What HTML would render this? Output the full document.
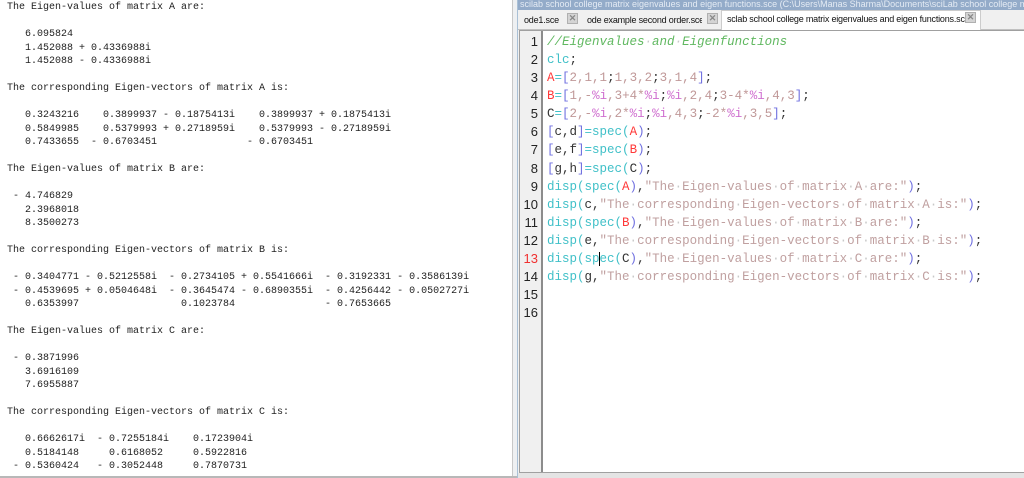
<!DOCTYPE html>
<html><head><meta charset="utf-8"><style>
*{margin:0;padding:0;box-sizing:border-box}
body{width:1024px;height:478px;overflow:hidden;background:#fff;position:relative;font-family:"Liberation Sans",sans-serif}
#con{position:absolute;left:0;top:0;width:513px;height:476px;background:#fff;border-right:1px solid #c8c8c8;overflow:hidden}
#con pre{position:absolute;left:7px;top:1px;font-family:"Liberation Mono",monospace;font-size:10px;line-height:13.5px;color:#222}
#sep{position:absolute;left:513px;top:0;width:4px;height:478px;background:#eef0f2}
#bot{position:absolute;left:0;top:476px;width:517px;height:2px;background:#b8b8b8}
#win{position:absolute;left:517px;top:0;width:507px;height:478px;background:#f0f0f0;border-left:1px solid #a9c0d6}
#title{position:absolute;left:0;top:0;width:507px;height:10px;background:#93abc9;color:#e4ebf4;font-size:9px;line-height:8px;white-space:nowrap;overflow:hidden;padding-left:2px}
#tabs{position:absolute;left:0;top:10px;width:507px;height:20px;background:#f0f0f0;border-bottom:1px solid #c0c0c0}
.tab{position:absolute;top:2px;height:18px;font-size:9px;letter-spacing:-0.2px;line-height:16px;color:#111;white-space:nowrap;overflow:hidden}
.x{position:absolute;top:3px;width:11px;height:11px;background:#d4d4d4;border:1px solid #b0b0b0;color:#888;font-size:9px;line-height:9px;text-align:center;font-weight:bold}
#ed{position:absolute;left:1px;top:30px;width:506px;height:443px;background:#fff;border:1px solid #a0a0a0}
#gut{position:absolute;left:0;top:0;width:23px;height:441px;background:#f0f0f0;border-right:2px solid #8c8c8c}
#gut div,#code div{height:18.08px;line-height:18px}
#gut{font-family:"Liberation Sans",sans-serif;font-size:13px;text-align:right;padding-right:3px;padding-top:2px;color:#222}
#code{position:absolute;left:27px;top:2px;font-family:"Liberation Mono",monospace;font-size:12.5px;white-space:pre;color:#333}
.cm{color:#60b860;font-style:italic}.k{color:#40c0c8}.r{color:#ff3838}.n{color:#c09898}.b{color:#7070e0}.p{color:#d070d0}.s{color:#c0a0a0}.d{color:#c8c8c8}
#below{position:absolute;left:0;top:473px;width:507px;height:5px;background:#e4e4e4}
</style></head><body>
<div id="con"><pre>The Eigen-values of matrix A are:

   6.095824
   1.452088 + 0.4336988i
   1.452088 - 0.4336988i

The corresponding Eigen-vectors of matrix A is:

   0.3243216    0.3899937 - 0.1875413i    0.3899937 + 0.1875413i
   0.5849985    0.5379993 + 0.2718959i    0.5379993 - 0.2718959i
   0.7433655  - 0.6703451               - 0.6703451

The Eigen-values of matrix B are:

 - 4.746829
   2.3968018
   8.3500273

The corresponding Eigen-vectors of matrix B is:

 - 0.3404771 - 0.5212558i  - 0.2734105 + 0.5541666i  - 0.3192331 - 0.3586139i
 - 0.4539695 + 0.0504648i  - 0.3645474 - 0.6890355i  - 0.4256442 - 0.0502727i
   0.6353997                 0.1023784               - 0.7653665

The Eigen-values of matrix C are:

 - 0.3871996
   3.6916109
   7.6955887

The corresponding Eigen-vectors of matrix C is:

   0.6662617i  - 0.7255184i    0.1723904i
   0.5184148     0.6168052     0.5922816
 - 0.5360424   - 0.3052448     0.7870731</pre></div>
<div id="sep"></div><div id="bot"></div>
<div id="win">
<div id="title">scilab school college matrix eigenvalues and eigen functions.sce (C:\Users\Manas Sharma\Documents\sciLab school college matrix eigenvalues and eigen functions.sce) - SciNotes</div>
<div id="tabs">
<div class="tab" style="left:6px;width:40px">ode1.sce</div><div class="x" style="left:49px">✕</div>
<div class="tab" style="left:69px;width:115px">ode example second order.sce</div><div class="x" style="left:189px">✕</div>
<div class="tab" style="left:203px;width:260px;background:#fff;top:0;height:20px;border:1px solid #ccc;border-bottom:none;line-height:16px;padding-left:5px">sclab school college matrix eigenvalues and eigen functions.sce</div><div class="x" style="left:447px;top:2px">✕</div>
</div>
<div id="ed">
<div id="gut"><div>1</div><div>2</div><div>3</div><div>4</div><div>5</div><div>6</div><div>7</div><div>8</div><div>9</div><div>10</div><div>11</div><div>12</div><div style="color:#f03030">13</div><div>14</div><div>15</div><div>16</div></div>
<div id="code"><div><span class="cm">//Eigenvalues<span class="d">·</span>and<span class="d">·</span>Eigenfunctions</span></div><div><span class="k">clc</span>;</div><div><span class="r">A</span><span class="k">=</span><span class="b">[</span><span class="n">2,1,1</span>;<span class="n">1,3,2</span>;<span class="n">3,1,4</span><span class="b">]</span>;</div><div><span class="r">B</span><span class="k">=</span><span class="b">[</span><span class="n">1,-</span><span class="p">%i</span><span class="n">,3+4*</span><span class="p">%i</span>;<span class="p">%i</span><span class="n">,2,4</span>;<span class="n">3-4*</span><span class="p">%i</span><span class="n">,4,3</span><span class="b">]</span>;</div><div>C<span class="k">=</span><span class="b">[</span><span class="n">2,-</span><span class="p">%i</span><span class="n">,2*</span><span class="p">%i</span>;<span class="p">%i</span><span class="n">,4,3</span>;<span class="n">-2*</span><span class="p">%i</span><span class="n">,3,5</span><span class="b">]</span>;</div><div><span class="b">[</span>c,d<span class="b">]</span><span class="k">=spec(</span><span class="r">A</span><span class="b">)</span>;</div><div><span class="b">[</span>e,f<span class="b">]</span><span class="k">=spec(</span><span class="r">B</span><span class="b">)</span>;</div><div><span class="b">[</span>g,h<span class="b">]</span><span class="k">=spec(</span>C<span class="b">)</span>;</div><div><span class="k">disp(spec(</span><span class="r">A</span><span class="b">)</span>,<span class="s">"The<span class="d">·</span>Eigen-values<span class="d">·</span>of<span class="d">·</span>matrix<span class="d">·</span>A<span class="d">·</span>are:"</span><span class="b">)</span>;</div><div><span class="k">disp(</span>c,<span class="s">"The<span class="d">·</span>corresponding<span class="d">·</span>Eigen-vectors<span class="d">·</span>of<span class="d">·</span>matrix<span class="d">·</span>A<span class="d">·</span>is:"</span><span class="b">)</span>;</div><div><span class="k">disp(spec(</span><span class="r">B</span><span class="b">)</span>,<span class="s">"The<span class="d">·</span>Eigen-values<span class="d">·</span>of<span class="d">·</span>matrix<span class="d">·</span>B<span class="d">·</span>are:"</span><span class="b">)</span>;</div><div><span class="k">disp(</span>e,<span class="s">"The<span class="d">·</span>corresponding<span class="d">·</span>Eigen-vectors<span class="d">·</span>of<span class="d">·</span>matrix<span class="d">·</span>B<span class="d">·</span>is:"</span><span class="b">)</span>;</div><div><span class="k">disp(sp</span><span style="border-left:1px solid #000;margin-left:-1px"></span><span class="k">ec(</span>C<span class="b">)</span>,<span class="s">"The<span class="d">·</span>Eigen-values<span class="d">·</span>of<span class="d">·</span>matrix<span class="d">·</span>C<span class="d">·</span>are:"</span><span class="b">)</span>;</div><div><span class="k">disp(</span>g,<span class="s">"The<span class="d">·</span>corresponding<span class="d">·</span>Eigen-vectors<span class="d">·</span>of<span class="d">·</span>matrix<span class="d">·</span>C<span class="d">·</span>is:"</span><span class="b">)</span>;</div></div>
</div>
<div id="below"></div>
</div>
</body></html>
